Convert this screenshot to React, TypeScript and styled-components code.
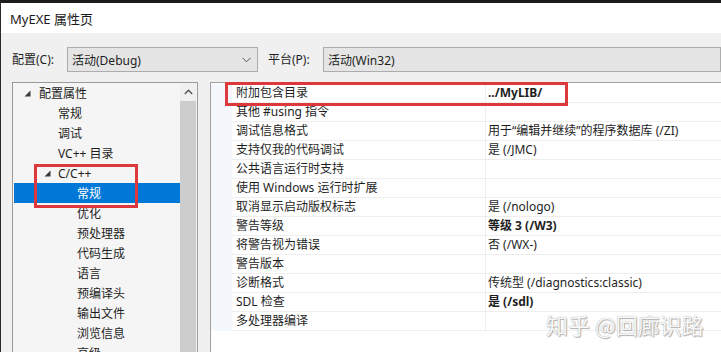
import React from "react";
import styled, { createGlobalStyle } from "styled-components";

const Global = createGlobalStyle`
  html, body { margin: 0; padding: 0; background: #f0f0f0; overflow: hidden; }
  body { font-family: "Noto Sans", "Noto Sans CJK SC", sans-serif; font-size: 12px; color: #1e1e1e; }
  * { box-sizing: border-box; }
`;

const Window = styled.div`
  width: 721px;
  height: 352px;
  display: flex;
  flex-direction: column;
  border-top: 3px solid #1c1c1c;
  border-left: 1px solid #2a2a2a;
  background: #f0f0f0;
  overflow: hidden;
  position: relative;
`;

const TitleBar = styled.div`
  height: 30px;
  flex: none;
  background: #ffffff;
  display: flex;
  align-items: center;
  padding-left: 9px;
  font-size: 13px;
  color: #1a1a1a;
`;

const Toolbar = styled.div`
  display: flex;
  align-items: center;
  padding: 14px 0 0 11px;
  height: 39px;
  flex: none;
`;

const Label = styled.div`
  width: 55px;
  flex: none;
  line-height: 25px;
`;

const Combo = styled.div<{ $width?: number }>`
  height: 25px;
  ${(p) => (p.$width ? `width: ${p.$width}px; flex: none;` : `flex: 1; border-right: none;`)}
  background: #e5e5e5;
  border: 1px solid #adadad;
  display: flex;
  align-items: center;
  padding-left: 4px;
  position: relative;
`;

const ComboText = styled.span`
  flex: 1;
`;

const Chevron = styled.svg`
  width: 9px;
  height: 6px;
  margin-right: 6px;
`;

const Spacer = styled.div<{ $w: number }>`
  width: ${(p) => p.$w}px;
  flex: none;
`;

const Panels = styled.div`
  flex: 1;
  display: flex;
  margin-top: 10px;
  padding-left: 11px;
  gap: 12px;
  min-height: 0;
`;

const TreePanel = styled.div`
  width: 186px;
  flex: none;
  border: 1px solid #9a9a9a;
  border-bottom: none;
  background: #f5f5f5;
  display: flex;
  position: relative;
`;

const TreeList = styled.div`
  flex: 1;
  padding-top: 0;
  padding-left: 1px;
`;

const TreeRow = styled.div<{ $level: number; $selected?: boolean }>`
  height: 20px;
  display: flex;
  align-items: center;
  padding-left: ${(p) => 25 + p.$level * 19}px;
  position: relative;
  background: ${(p) => (p.$selected ? "#0078d7" : "transparent")};
  color: ${(p) => (p.$selected ? "#ffffff" : "#1e1e1e")};
  white-space: nowrap;
`;

const Expander = styled.svg`
  position: absolute;
  width: 7px;
  height: 7px;
  top: 7px;
`;

const Scrollbar = styled.div`
  width: 16px;
  flex: none;
  display: flex;
  flex-direction: column;
  margin-right: 1px;
`;

const ScrollUp = styled.div`
  height: 18px;
  display: flex;
  align-items: center;
  justify-content: center;
  background: #f0f0f0;
`;

const ScrollThumb = styled.div`
  flex: 1;
  background: #cdcdcd;
`;

const RedBox = styled.div<{ $l: number; $t: number; $w: number; $h: number }>`
  position: absolute;
  left: ${(p) => p.$l}px;
  top: ${(p) => p.$t}px;
  width: ${(p) => p.$w}px;
  height: ${(p) => p.$h}px;
  border: 3px solid #dd383c;
  pointer-events: none;
`;

const GridPanel = styled.div`
  flex: 1;
  border-left: 1px solid #a0a0a0;
  border-top: 1px solid #a0a0a0;
  background: #ffffff;
  position: relative;
  padding-top: 1px;
`;

const Row = styled.div`
  display: grid;
  grid-template-columns: 21px 253px 1fr;
  height: 19px;
`;

const Gutter = styled.div`
  background: #f4f7fc;
`;

const Cell = styled.div<{ $bold?: boolean; $sep?: boolean }>`
  border-bottom: 1px solid #eeeeee;
  ${(p) => (p.$sep ? "border-left: 1px solid #eeeeee; padding-left: 2px;" : "padding-left: 4px;")}
  line-height: 18px;
  white-space: nowrap;
  overflow: hidden;
  font-weight: ${(p) => (p.$bold ? 700 : 400)};
`;

const Watermark = styled.div`
  position: absolute;
  left: 545px;
  top: 305px;
  font-size: 22px;
  font-family: "Noto Sans CJK SC", sans-serif;
  color: rgba(255, 255, 255, 0.95);
  text-shadow: 0 0 1px rgba(140, 140, 140, 0.9), 1px 1px 1px rgba(150, 150, 150, 0.7);
  pointer-events: none;
  white-space: nowrap;
`;

type TreeItem = { label: string; level: number; expander?: boolean; selected?: boolean };

const treeItems: TreeItem[] = [
  { label: "配置属性", level: 0, expander: true },
  { label: "常规", level: 1 },
  { label: "调试", level: 1 },
  { label: "VC++ 目录", level: 1 },
  { label: "C/C++", level: 1, expander: true },
  { label: "常规", level: 2, selected: true },
  { label: "优化", level: 2 },
  { label: "预处理器", level: 2 },
  { label: "代码生成", level: 2 },
  { label: "语言", level: 2 },
  { label: "预编译头", level: 2 },
  { label: "输出文件", level: 2 },
  { label: "浏览信息", level: 2 },
  { label: "高级", level: 2 },
];

type Prop = { name: string; value?: string; bold?: boolean };

const props: Prop[] = [
  { name: "附加包含目录", value: "../MyLIB/", bold: true },
  { name: "其他 #using 指令" },
  { name: "调试信息格式", value: "用于“编辑并继续”的程序数据库 (/ZI)" },
  { name: "支持仅我的代码调试", value: "是 (/JMC)" },
  { name: "公共语言运行时支持" },
  { name: "使用 Windows 运行时扩展" },
  { name: "取消显示启动版权标志", value: "是 (/nologo)" },
  { name: "警告等级", value: "等级 3 (/W3)", bold: true },
  { name: "将警告视为错误", value: "否 (/WX-)" },
  { name: "警告版本" },
  { name: "诊断格式", value: "传统型 (/diagnostics:classic)" },
  { name: "SDL 检查", value: "是 (/sdl)", bold: true },
  { name: "多处理器编译" },
];

const DownChevron = () => (
  <Chevron viewBox="0 0 9 6">
    <polyline points="0.5,0.8 4.5,4.8 8.5,0.8" fill="none" stroke="#555" strokeWidth="1" />
  </Chevron>
);

export default function App() {
  return (
    <>
      <Global />
      <Window>
        <TitleBar>MyEXE 属性页</TitleBar>
        <Toolbar>
          <Label>配置(C):</Label>
          <Combo $width={191}>
            <ComboText>活动(Debug)</ComboText>
            <DownChevron />
          </Combo>
          <Spacer $w={10} />
          <Label>平台(P):</Label>
          <Combo>
            <ComboText>活动(Win32)</ComboText>
          </Combo>
        </Toolbar>
        <Panels>
          <TreePanel>
            <TreeList>
              {treeItems.map((t, i) => (
                <TreeRow key={i} $level={t.level} $selected={t.selected}>
                  {t.expander && (
                    <Expander viewBox="0 0 7 7" style={{ left: 10 + t.level * 20 }}>
                      <polygon points="6.5,0.5 6.5,6.5 0.5,6.5" fill="#3a3a3a" />
                    </Expander>
                  )}
                  {t.label}
                </TreeRow>
              ))}
            </TreeList>
            <Scrollbar>
              <ScrollUp>
                <svg width="9" height="6" viewBox="0 0 9 6">
                  <polyline points="0.8,5 4.5,1.3 8.2,5" fill="none" stroke="#555" strokeWidth="1.4" />
                </svg>
              </ScrollUp>
              <ScrollThumb />
            </Scrollbar>
            <RedBox $l={21} $t={81} $w={104} $h={44} />
          </TreePanel>
          <GridPanel>
            {props.map((p, i) => (
              <Row key={i}>
                <Gutter />
                <Cell>{p.name}</Cell>
                <Cell $sep $bold={p.bold}>{p.value ?? ""}</Cell>
              </Row>
            ))}
            <RedBox $l={14} $t={-1} $w={343} $h={24} />
          </GridPanel>
        </Panels>
        <Watermark>知乎 @回廊识路</Watermark>
      </Window>
    </>
  );
}
